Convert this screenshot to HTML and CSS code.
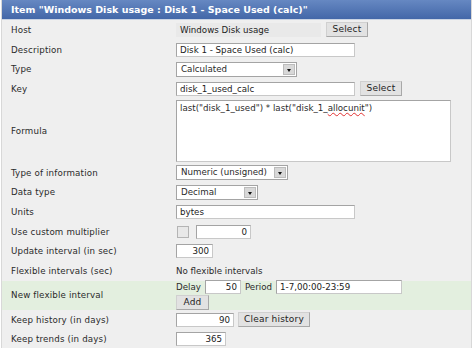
FILE: index.html
```html
<!DOCTYPE html>
<html lang="en">
  <head>
    <meta charset="UTF-8" />
    <title>Item</title>
    <link rel="stylesheet" href="styles.css">
  </head>
  <body>
    <div class="form">
      <div class="title">Item "Windows Disk usage : Disk 1 - Space Used (calc)"</div>

      <div class="row">
        <div class="label">Host</div>
        <div class="field">
          <span class="input readonly w-host">Windows Disk usage</span>
          <span class="btn btn-select">Select</span>
        </div>
      </div>

      <div class="row">
        <div class="label">Description</div>
        <div class="field"><span class="input w-long">Disk 1 - Space Used (calc)</span></div>
      </div>

      <div class="row">
        <div class="label">Type</div>
        <div class="field">
          <span class="select w-type">Calculated<span class="arrow"></span></span>
        </div>
      </div>

      <div class="row">
        <div class="label">Key</div>
        <div class="field">
          <span class="input w-long">disk_1_used_calc</span>
          <span class="btn btn-select">Select</span>
        </div>
      </div>

      <div class="row row-formula">
        <div class="label">Formula</div>
        <div class="field">
          <div class="textarea">last("disk_1_used") * last("disk_1_<span class="typo">allocunit</span>")</div>
        </div>
      </div>

      <div class="row">
        <div class="label">Type of information</div>
        <div class="field">
          <span class="select w-info">Numeric (unsigned)<span class="arrow"></span></span>
        </div>
      </div>

      <div class="row">
        <div class="label">Data type</div>
        <div class="field">
          <span class="select w-data">Decimal<span class="arrow"></span></span>
        </div>
      </div>

      <div class="row">
        <div class="label">Units</div>
        <div class="field"><span class="input w-long">bytes</span></div>
      </div>

      <div class="row">
        <div class="label">Use custom multiplier</div>
        <div class="field">
          <span class="checkbox"></span>
          <span class="input num w-mult">0</span>
        </div>
      </div>

      <div class="row">
        <div class="label">Update interval (in sec)</div>
        <div class="field"><span class="input num w-update">300</span></div>
      </div>

      <div class="row">
        <div class="label">Flexible intervals (sec)</div>
        <div class="field">No flexible intervals</div>
      </div>

      <div class="row row-new">
        <div class="label">New flexible interval</div>
        <div class="field field-stack">
          <div class="line">
            <span>Delay</span>
            <span class="input num w-delay">50</span>
            <span>Period</span>
            <span class="input w-period">1-7,00:00-23:59</span>
          </div>
          <span class="btn btn-add">Add</span>
        </div>
      </div>

      <div class="row">
        <div class="label">Keep history (in days)</div>
        <div class="field">
          <span class="input num w-history">90</span>
          <span class="btn btn-clear">Clear history</span>
        </div>
      </div>

      <div class="row">
        <div class="label">Keep trends (in days)</div>
        <div class="field"><span class="input num w-trends">365</span></div>
      </div>
    </div>
  </body>
</html>
```

FILE: styles.css
```css
* {
  box-sizing: border-box;
  margin: 0;
  padding: 0;
}

body {
  background-color: #ffffff;
  font-family: "DejaVu Sans", Verdana, sans-serif;
  font-size: 8.7px;
  color: #2a2a2a;
}

.form {
  width: 471px;
  height: 348px;
  margin-left: 1px;
  background-color: #efefef;
  border-left: 1px solid #d8d8d8;
  border-right: 1px solid #d8d8d8;
  overflow: hidden;
}

.title {
  height: 20px;
  padding-left: 9px;
  line-height: 19px;
  color: #ffffff;
  font-weight: bold;
  font-size: 9.5px;
  background: linear-gradient(#6688c2, #4367a8);
  border-bottom: 1px solid #c9d3e3;
}

.row {
  display: flex;
  align-items: center;
  height: 19.7px;
}

.label {
  flex-shrink: 0;
  width: 174px;
  padding-left: 9px;
  letter-spacing: 0.15px;
}

.field {
  display: flex;
  align-items: center;
  gap: 5px;
  white-space: nowrap;
}

.row-formula {
  height: 64px;
}

.row-new {
  height: 29px;
  background-color: #e3efdf;
}

.field-stack {
  flex-direction: column;
  align-items: flex-start;
  gap: 1px;
}

.line {
  display: flex;
  align-items: center;
  gap: 4px;
}

.input {
  display: inline-block;
  height: 14px;
  line-height: 12px;
  padding: 0 3px;
  background-color: #ffffff;
  border: 1px solid #a4a4a4;
  border-right-color: #c8c8c8;
  border-bottom-color: #c8c8c8;
  color: #222222;
}

.readonly {
  background-color: #e9e9e9;
  border-color: #e9e9e9;
}

.num {
  text-align: right;
}

.w-host { width: 145px; }
.w-long { width: 179px; }
.w-mult { width: 55px; }
.w-update { width: 37px; }
.w-delay { width: 36px; }
.w-period { width: 126px; }
.w-history { width: 58px; }
.w-trends { width: 50px; }

.btn {
  display: inline-block;
  height: 15px;
  line-height: 13px;
  padding: 0 5px;
  text-align: center;
  background-color: #e2e2e2;
  border: 1px solid #a8a8a8;
  border-top-color: #d0d0d0;
  border-left-color: #d0d0d0;
  color: #222222;
  font-size: 9px;
  letter-spacing: 0.2px;
}

.btn-select { width: 42px; }
.btn-add { width: 33px; }
.btn-clear { margin-left: -1px; }

.select {
  position: relative;
  display: inline-block;
  height: 15px;
  line-height: 13px;
  padding-left: 4px;
  background-color: #ffffff;
  border: 1px solid #a4a4a4;
}

.w-type { width: 121px; }
.w-info { width: 112px; }
.w-data { width: 82px; }

.arrow {
  position: absolute;
  right: 1px;
  top: 1px;
  width: 12px;
  height: 11px;
  background-color: #d8d8d8;
  border: 1px solid #bcbcbc;
}

.arrow::after {
  content: "";
  position: absolute;
  left: 3px;
  top: 4px;
  border-left: 2.5px solid transparent;
  border-right: 2.5px solid transparent;
  border-top: 3px solid #111111;
}

.textarea {
  width: 275px;
  height: 62px;
  padding: 2px 3px;
  background-color: #ffffff;
  border: 1px solid #a4a4a4;
  border-right-color: #c8c8c8;
  border-bottom-color: #c8c8c8;
}

.typo {
  text-decoration: underline wavy #e03030;
  text-decoration-thickness: 1px;
}

.checkbox {
  display: inline-block;
  width: 12px;
  height: 12px;
  margin-left: 1px;
  margin-right: 2px;
  background-color: #e8e8e8;
  border: 1px solid #b4b4b4;
}
```
